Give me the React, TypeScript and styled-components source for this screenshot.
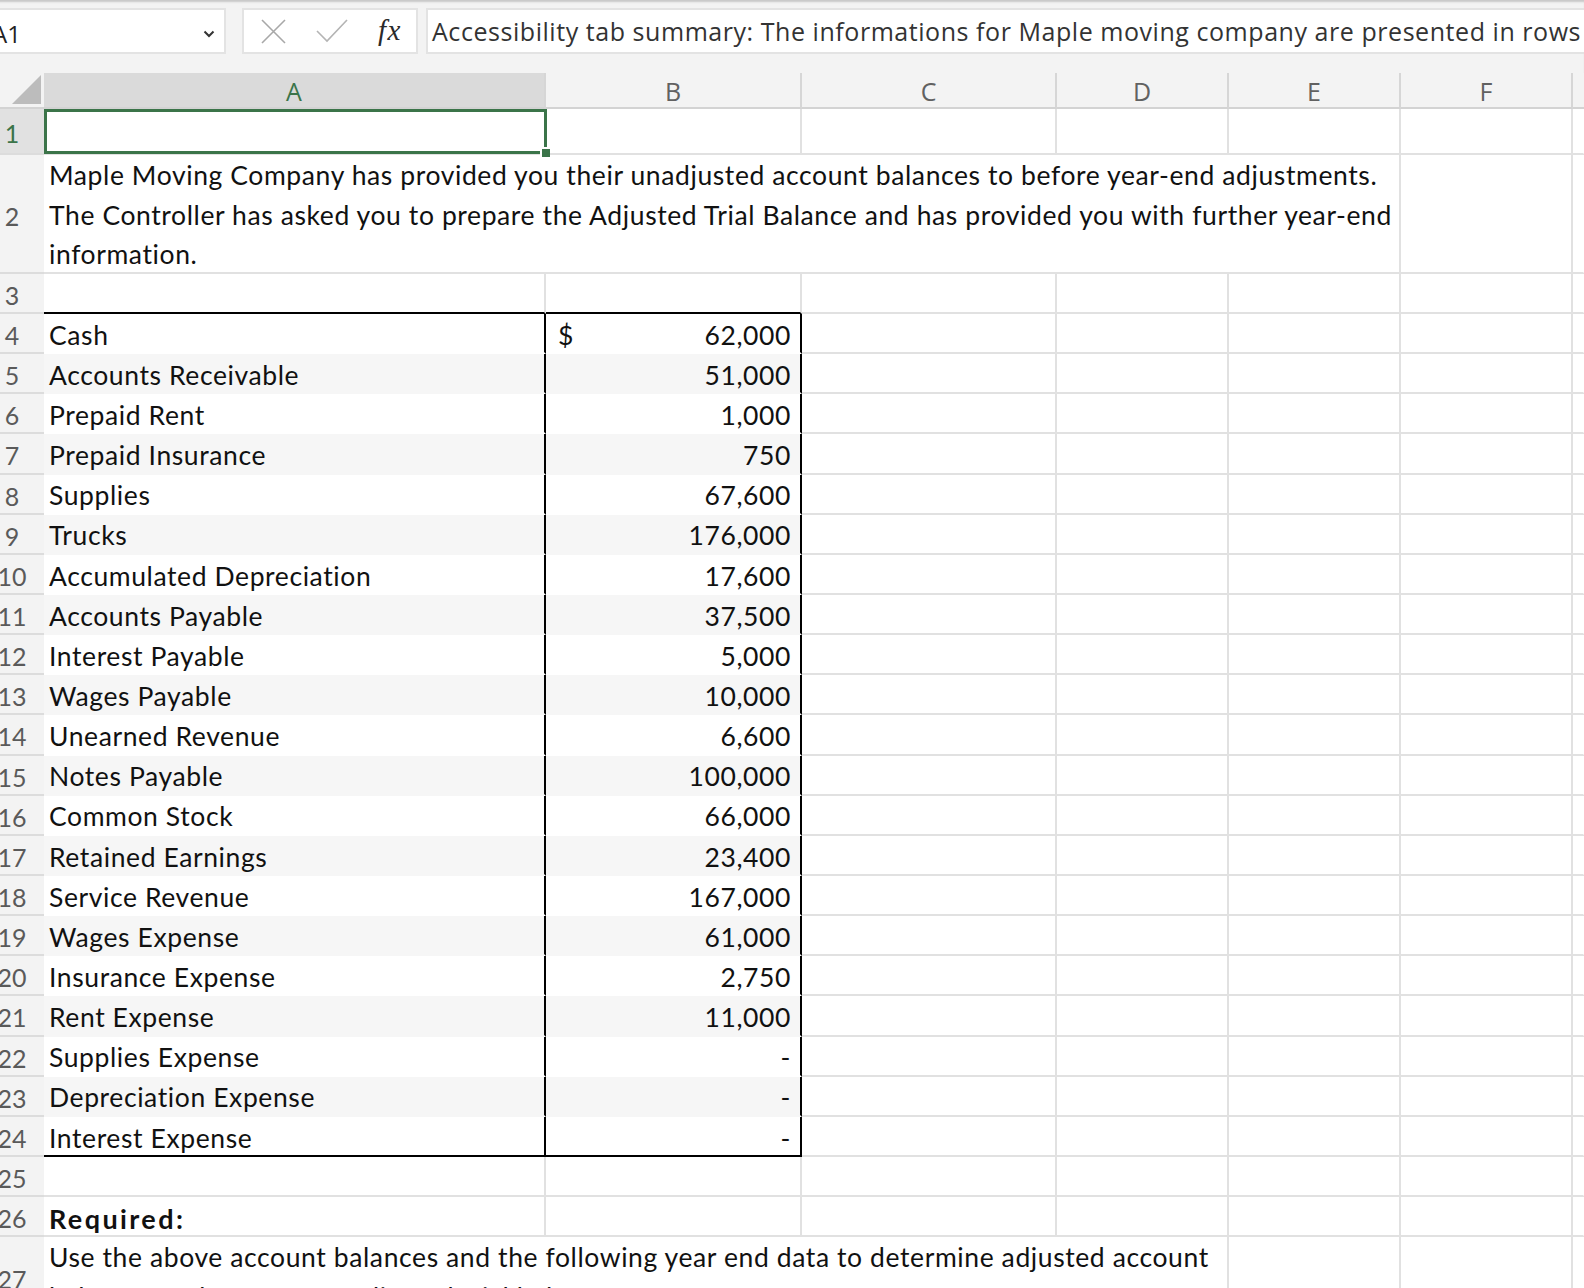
import React from "react";
import styled, { createGlobalStyle } from "styled-components";

const GlobalStyle = createGlobalStyle`
  html, body {
    margin: 0;
    padding: 0;
    background: #ffffff;
    overflow: hidden;
  }
`;

const CELL_FONT = `Lato, "Liberation Sans", sans-serif`;
const UI_FONT = `"Open Sans", "Noto Sans", sans-serif`;
const GREEN = "#3b7449";
const GRID = "#e1e1e1";
const BAND = "#f6f6f6";

const COLS = [64, 502, 256, 255, 172, 172, 172];
const COL_LETTERS = ["A", "B", "C", "D", "E", "F", "G"];

type Line = "grid" | "black" | "none";

const lineColor = (kind: Line, bg: string) =>
  kind === "black" ? "#000" : kind === "grid" ? GRID : bg;

const Page = styled.div`
  width: 1604px;
  height: 1288px;
  margin-left: -20px;
  overflow: hidden;
  background: #fff;
`;

const Toolbar = styled.div`
  display: flex;
  align-items: stretch;
  height: 73px;
  box-sizing: border-box;
  padding: 8px 0 19px;
  background: #f3f3f3;
  box-shadow: inset 0 3px 2px -1px #c8c8c8;
`;

const NameBox = styled.div`
  width: 246px;
  box-sizing: border-box;
  display: flex;
  align-items: center;
  justify-content: space-between;
  padding: 5px 9px 0 12px;
  background: #fff;
  border: 2px solid #e3e3e3;
  border-left: none;
  font-family: ${UI_FONT};
  font-size: 24px;
  color: #222;
`;

const FuncBox = styled.div`
  width: 176px;
  margin-left: 16px;
  box-sizing: border-box;
  display: flex;
  align-items: center;
  gap: 30px;
  padding-left: 17px;
  background: #fff;
  border: 2px solid #e3e3e3;
`;

const FxLabel = styled.span`
  font-family: "Liberation Serif", "DejaVu Serif", serif;
  font-style: italic;
  font-size: 29px;
  color: #2a2a2a;
  letter-spacing: 1.5px;
  margin-top: -2px;
`;

const FormulaBox = styled.div`
  flex: 1;
  margin-left: 8px;
  box-sizing: border-box;
  display: flex;
  align-items: center;
  padding-left: 4px;
  background: #fff;
  border: 2px solid #e3e3e3;
  border-right: none;
  font-family: ${UI_FONT};
  font-size: 25px;
  letter-spacing: 0.55px;
  color: #333;
  white-space: nowrap;
  overflow: hidden;
`;

const Sheet = styled.div`
  display: grid;
  grid-template-columns: ${COLS.map((c) => `${c}px`).join(" ")} 1fr;
  grid-template-rows: 36px 46px 119px 40px repeat(21, 40.15px) 40px 40px 82px;
`;

const Corner = styled.div`
  background: #f3f3f3;
  border-bottom: 2px solid #d3d3d3;
  box-sizing: border-box;
  display: flex;
  justify-content: flex-end;
  align-items: flex-start;
  padding: 2px 3px 0 0;
`;

const ColHeader = styled.div<{ $selected?: boolean; $last?: boolean }>`
  background: ${(p) => (p.$selected ? "#dadada" : "#f3f3f3")};
  color: ${(p) => (p.$selected ? GREEN : "#616161")};
  border-right: ${(p) => (p.$last ? "none" : "2px solid #d6d6d6")};
  border-bottom: 2px solid #d3d3d3;
  box-sizing: border-box;
  display: flex;
  align-items: center;
  justify-content: center;
  font-family: ${UI_FONT};
  font-size: 25px;
  padding-top: 1px;
`;

const RowHead = styled.div<{ $selected?: boolean }>`
  background: ${(p) => (p.$selected ? "#e1e1e1" : "#f3f3f3")};
  color: ${(p) => (p.$selected ? GREEN : "#5a5a5a")};
  border-bottom: 2px solid #dcdcdc;
  box-sizing: border-box;
  display: flex;
  align-items: center;
  justify-content: center;
  padding-top: 4px;
  font-family: ${CELL_FONT};
  font-size: 25px;
`;

type CellProps = {
  $span?: number;
  $band?: boolean;
  $right?: Line;
  $bottom?: Line;
  $bold?: boolean;
  $top?: boolean;
};

const Cell = styled.div<CellProps>`
  grid-column: span ${(p) => p.$span ?? 1};
  position: relative;
  box-sizing: border-box;
  min-width: 0;
  background: ${(p) => (p.$band ? BAND : "#fff")};
  border-right: 2px solid ${(p) => lineColor(p.$right ?? "grid", p.$band ? BAND : "#fff")};
  border-bottom: 2px solid ${(p) => lineColor(p.$bottom ?? "grid", p.$band ? BAND : "#fff")};
  display: flex;
  align-items: ${(p) => (p.$top ? "flex-start" : "center")};
  padding: ${(p) => (p.$top ? "1px 5px 0" : "5px 5px 0")};
  font-family: ${CELL_FONT};
  font-size: ${(p) => (p.$bold ? "27px" : "26.5px")};
  letter-spacing: ${(p) => (p.$bold ? "2.4px" : "0.6px")};
  font-weight: ${(p) => (p.$bold ? 700 : 400)};
  line-height: 39.6px;
  color: #111;
  white-space: pre;
`;

const AmountCell = styled(Cell)`
  justify-content: space-between;
  padding: 5px 9px 0 12px;
`;

const Selection = styled.div`
  position: absolute;
  left: 0;
  top: 0;
  right: -3px;
  bottom: -1px;
  border: 3px solid ${GREEN};
  z-index: 2;
  pointer-events: none;
`;

const FillHandle = styled.div`
  position: absolute;
  right: -6px;
  bottom: -6px;
  width: 8px;
  height: 8px;
  background: ${GREEN};
  border: 2px solid #fff;
  border-right: none;
  border-bottom: none;
`;

const accounts: [string, string][] = [
  ["Cash", "62,000"],
  ["Accounts Receivable", "51,000"],
  ["Prepaid Rent", "1,000"],
  ["Prepaid Insurance", "750"],
  ["Supplies", "67,600"],
  ["Trucks", "176,000"],
  ["Accumulated Depreciation", "17,600"],
  ["Accounts Payable", "37,500"],
  ["Interest Payable", "5,000"],
  ["Wages Payable", "10,000"],
  ["Unearned Revenue", "6,600"],
  ["Notes Payable", "100,000"],
  ["Common Stock", "66,000"],
  ["Retained Earnings", "23,400"],
  ["Service Revenue", "167,000"],
  ["Wages Expense", "61,000"],
  ["Insurance Expense", "2,750"],
  ["Rent Expense", "11,000"],
  ["Supplies Expense", "-"],
  ["Depreciation Expense", "-"],
  ["Interest Expense", "-"],
];

const intro =
  "Maple Moving Company has provided you their unadjusted account balances to before year-end adjustments.\n" +
  "The Controller has asked you to prepare the Adjusted Trial Balance and has provided you with further year-end\n" +
  "information.";

const required =
  "Use the above account balances and the following year end data to determine adjusted account\n" +
  "balances and prepare an adjusted trial balance.";

// empty cells from column index `from` (1 = A) to G
function blanks(key: string, from: number) {
  const out = [];
  for (let c = from; c < COL_LETTERS.length; c++) {
    out.push(
      <Cell key={`${key}-${c}`} $right={c === COL_LETTERS.length - 1 ? "none" : "grid"} />
    );
  }
  return out;
}

const CloseIcon = () => (
  <svg width="25" height="25" viewBox="0 0 25 25">
    <path d="M1 1 L24 24 M24 1 L1 24" stroke="#a8a8a8" strokeWidth="1.6" fill="none" />
  </svg>
);

const CheckIcon = () => (
  <svg width="32" height="24" viewBox="0 0 32 24">
    <path d="M1 12 L11 22 L31 1" stroke="#b4b4b4" strokeWidth="1.6" fill="none" />
  </svg>
);

const Chevron = () => (
  <svg width="12" height="8" viewBox="0 0 12 8">
    <path d="M1.5 1.5 L6 6 L10.5 1.5" stroke="#333" strokeWidth="2" fill="none" />
  </svg>
);

const CornerTriangle = () => (
  <svg width="29" height="29" viewBox="0 0 29 29">
    <polygon points="0,29 29,29 29,0" fill="#bcbcbc" />
  </svg>
);

export default function App() {
  return (
    <Page>
      <GlobalStyle />
      <Toolbar>
        <NameBox>
          <span>A1</span>
          <Chevron />
        </NameBox>
        <FuncBox>
          <CloseIcon />
          <CheckIcon />
          <FxLabel>fx</FxLabel>
        </FuncBox>
        <FormulaBox>
          Accessibility tab summary: The informations for Maple moving company are presented in rows
        </FormulaBox>
      </Toolbar>

      <Sheet>
        <Corner>
          <CornerTriangle />
        </Corner>
        {COL_LETTERS.map((l, i) => (
          <ColHeader key={l} $selected={i === 0} $last={i === COL_LETTERS.length - 1}>
            {i < 6 ? l : ""}
          </ColHeader>
        ))}

        <RowHead $selected>1</RowHead>
        <Cell>
          <Selection>
            <FillHandle />
          </Selection>
        </Cell>
        {blanks("r1", 1)}

        <RowHead>2</RowHead>
        <Cell $span={5} $top>
          {intro}
        </Cell>
        {blanks("r2", 5)}

        <RowHead>3</RowHead>
        <Cell $bottom="black" />
        <Cell $bottom="black" />
        {blanks("r3", 2)}

        {accounts.map(([name, amount], i) => {
          const row = i + 4;
          const band = i % 2 === 1;
          const last = i === accounts.length - 1;
          return (
            <React.Fragment key={name}>
              <RowHead>{row}</RowHead>
              <Cell $band={band} $right="black" $bottom={last ? "black" : "none"}>
                {name}
              </Cell>
              <AmountCell $band={band} $right="black" $bottom={last ? "black" : "none"}>
                <span>{i === 0 ? "$" : ""}</span>
                <span>{amount}</span>
              </AmountCell>
              {blanks(`r${row}`, 2)}
            </React.Fragment>
          );
        })}

        <RowHead>25</RowHead>
        {blanks("r25", 0)}

        <RowHead>26</RowHead>
        <Cell $bold>Required:</Cell>
        {blanks("r26", 1)}

        <RowHead>27</RowHead>
        <Cell $span={4} $top>
          {required}
        </Cell>
        {blanks("r27", 4)}
      </Sheet>
    </Page>
  );
}
